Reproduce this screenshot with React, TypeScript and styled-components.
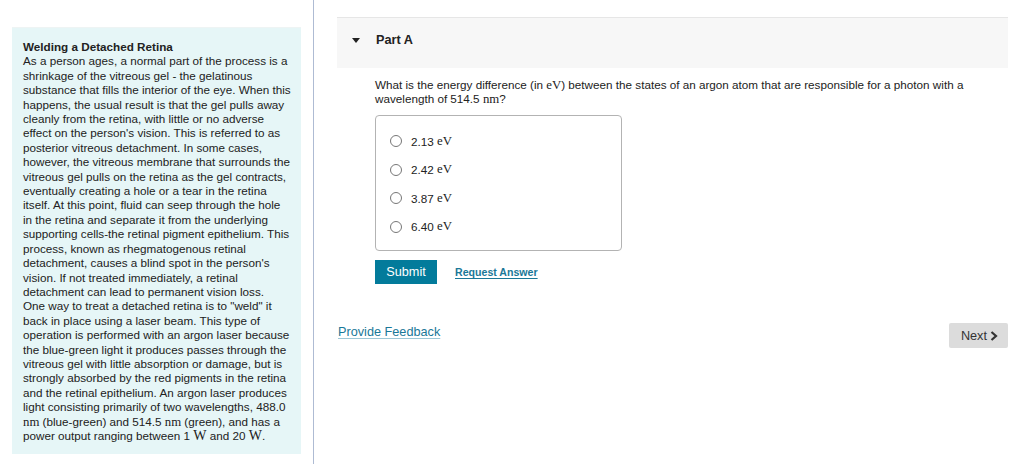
import React from 'react';
import styled, { createGlobalStyle } from 'styled-components';

const GlobalStyle = createGlobalStyle`
  html, body {
    margin: 0;
    padding: 0;
    background: #ffffff;
    font-family: "Liberation Sans", Arial, Helvetica, sans-serif;
    color: #222;
  }
`;

// Data
const PASSAGE: React.ReactNode[] = [
    'As a person ages, a normal part of the process is a',
    'shrinkage of the vitreous gel - the gelatinous',
    'substance that fills the interior of the eye. When this',
    'happens, the usual result is that the gel pulls away',
    'cleanly from the retina, with little or no adverse',
    "effect on the person's vision. This is referred to as",
    'posterior vitreous detachment. In some cases,',
    'however, the vitreous membrane that surrounds the',
    'vitreous gel pulls on the retina as the gel contracts,',
    'eventually creating a hole or a tear in the retina',
    'itself. At this point, fluid can seep through the hole',
    'in the retina and separate it from the underlying',
    'supporting cells-the retinal pigment epithelium. This',
    'process, known as rhegmatogenous retinal',
    "detachment, causes a blind spot in the person's",
    'vision. If not treated immediately, a retinal',
    'detachment can lead to permanent vision loss.',
    'One way to treat a detached retina is to "weld" it',
    'back in place using a laser beam. This type of',
    'operation is performed with an argon laser because',
    'the blue-green light it produces passes through the',
    'vitreous gel with little absorption or damage, but is',
    'strongly absorbed by the red pigments in the retina',
    'and the retinal epithelium. An argon laser produces',
    'light consisting primarily of two wavelengths, 488.0',
    'UNIT_LINE',
    'POWER_LINE',
];

const OPTIONS = ['2.13', '2.42', '3.87', '6.40'];

// Styled Components
const Page = styled.div`
  display: flex;
  width: 1024px;
  height: 465px;
  overflow: hidden;
`;

const LeftColumn = styled.div`
  width: 314px;
  flex-shrink: 0;
  box-sizing: border-box;
  padding: 27px 12px 0 12px;
  border-right: 1px solid #aebbd3;
  height: 464px;
`;

const Passage = styled.div`
  background: #e6f6f7;
  border-top: 1px solid #eef4f4;
  padding: 12px 4px 11px 11px;
  font-size: 11.7px;
  line-height: 14.4px;
  color: #222;
`;

const Title = styled.div`
  font-weight: bold;
`;

const Line = styled.div`
  white-space: nowrap;
`;

const Math = styled.span<{ $size?: number }>`
  font-family: "Liberation Serif", "Times New Roman", serif;
  font-size: ${p => p.$size ?? 12.8}px;
`;

const RightColumn = styled.div`
  flex: 1;
  box-sizing: border-box;
  padding: 17px 16px 0 23px;
  display: flex;
  flex-direction: column;
`;

const PartHeader = styled.div`
  display: flex;
  align-items: center;
  height: 15px;
  padding: 14px 0 21px 15px;
  background: #f7f7f7;
  border-top: 1px solid #e6e6e6;
  font-size: 12.7px;
  font-weight: bold;
  color: #222;
`;

const Caret = styled.span`
  width: 0;
  height: 0;
  border-left: 4px solid transparent;
  border-right: 4px solid transparent;
  border-top: 5px solid #222;
  margin-right: 16px;
  margin-top: 1px;
`;

const Body = styled.div`
  padding-left: 38px;
  padding-top: 10px;
`;

const Question = styled.div`
  font-size: 11.7px;
  line-height: 14px;
  color: #222;
`;

const OptionsBox = styled.div`
  margin-top: 9px;
  width: 247px;
  height: 136px;
  box-sizing: border-box;
  border: 1px solid #b3b3b3;
  border-radius: 4px;
  padding: 18px 0 0 14px;
  display: flex;
  flex-direction: column;
  gap: 14.5px;
`;

const OptionRow = styled.label`
  display: flex;
  align-items: center;
  height: 14px;
  font-size: 11.7px;
  color: #222;
`;

const Radio = styled.span`
  width: 10px;
  height: 10px;
  border: 1px solid #777;
  border-radius: 50%;
  background: #fff;
  margin-right: 9px;
`;

const Actions = styled.div`
  display: flex;
  align-items: center;
  gap: 18px;
  margin-top: 9px;
`;

const SubmitButton = styled.button`
  width: 62px;
  height: 24px;
  border: none;
  border-radius: 0;
  background: #037b9b;
  color: #fff;
  font-family: "Liberation Sans", Arial, sans-serif;
  font-size: 12.7px;
  padding: 0;
`;

const TextLink = styled.a<{ $bold?: boolean; $size: number }>`
  color: #1a7898;
  font-size: ${p => p.$size}px;
  font-weight: ${p => (p.$bold ? 'bold' : 'normal')};
  text-decoration: underline;
  text-decoration-color: ${p => (p.$bold ? '#1a7898' : '#9cc7d6')};
  text-underline-offset: 2px;
  cursor: pointer;
`;

const Footer = styled.div`
  display: flex;
  justify-content: space-between;
  align-items: flex-start;
  margin-top: 40px;
  padding-left: 1px;
`;

const FeedbackLink = styled(TextLink)`
  margin-top: 1px;
`;

const NextButton = styled.button`
  display: flex;
  align-items: center;
  gap: 3px;
  height: 25px;
  padding: 0 10px 0 12px;
  margin-top: -1px;
  border: none;
  border-radius: 2px;
  background: #dcdcdc;
  color: #333;
  font-family: "Liberation Sans", Arial, sans-serif;
  font-size: 12.7px;
`;

const renderLine = (line: React.ReactNode, i: number) => {
    if (line === 'UNIT_LINE') {
        return (
            <Line key={i}>
                <Math>nm</Math> (blue-green) and 514.5 <Math>nm</Math> (green), and has a
            </Line>
        );
    }
    if (line === 'POWER_LINE') {
        return (
            <Line key={i}>
                power output ranging between 1 <Math $size={14}>W</Math> and 20 <Math $size={14}>W</Math>.
            </Line>
        );
    }
    return <Line key={i}>{line}</Line>;
};

const App: React.FC = () => {
    return (
        <>
            <GlobalStyle />
            <Page>
                <LeftColumn>
                    <Passage>
                        <Title>Welding a Detached Retina</Title>
                        {PASSAGE.map(renderLine)}
                    </Passage>
                </LeftColumn>
                <RightColumn>
                    <PartHeader>
                        <Caret />
                        Part A
                    </PartHeader>
                    <Body>
                        <Question>
                            What is the energy difference (in <Math>eV</Math>) between the states of an argon atom that are responsible for a photon with a
                            <br />
                            wavelength of 514.5 <Math>nm</Math>?
                        </Question>
                        <OptionsBox>
                            {OPTIONS.map((value) => (
                                <OptionRow key={value}>
                                    <Radio />
                                    {value}&nbsp;<Math>eV</Math>
                                </OptionRow>
                            ))}
                        </OptionsBox>
                        <Actions>
                            <SubmitButton>Submit</SubmitButton>
                            <TextLink $bold $size={10.6}>Request Answer</TextLink>
                        </Actions>
                    </Body>
                    <Footer>
                        <FeedbackLink $size={12.7}>Provide Feedback</FeedbackLink>
                        <NextButton>
                            Next
                            <svg width="8" height="10" viewBox="0 0 8 10">
                                <path d="M1.5 1 L6 5 L1.5 9" fill="none" stroke="#333" strokeWidth="2.2" />
                            </svg>
                        </NextButton>
                    </Footer>
                </RightColumn>
            </Page>
        </>
    );
};

export default App;
